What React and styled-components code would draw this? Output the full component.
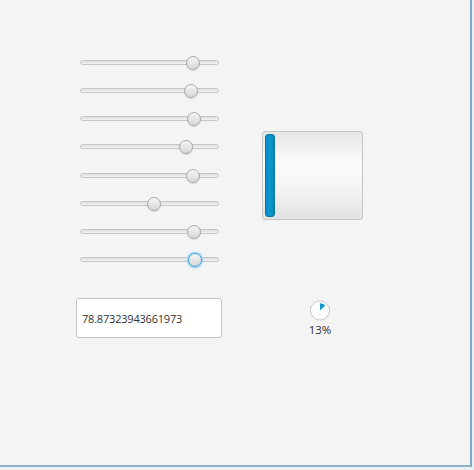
import { createGlobalStyle } from 'styled-components';
import styled from 'styled-components';

const GlobalStyle = createGlobalStyle`
  html, body {
    margin: 0;
    padding: 0;
    background: #eaf1f5;
  }
  * {
    box-sizing: border-box;
  }
`;

const Window = styled.div`
  background: #f4f4f4;
  border-bottom: 2px solid #8eb1c4;
  border-right: 2px solid #7fa8c9;
  font-family: 'Open Sans', 'Segoe UI', sans-serif;
  height: 467px;
  width: 472px;
`;

const Layout = styled.div`
  column-gap: 40px;
  display: grid;
  grid-template-columns: 146px 100px;
  grid-template-rows: 226px 39px;
  padding: 48px 0 0 76px;
  row-gap: 24px;
`;

const SliderList = styled.div`
  display: flex;
  flex-direction: column;
  padding-left: 4px;
`;

const SliderRow = styled.div`
  align-items: center;
  display: flex;
  height: 28.25px;
  position: relative;
  width: 139px;
`;

const Track = styled.div`
  background: linear-gradient(#dedede, #f3f3f3);
  border: 1px solid #c6c6c6;
  border-radius: 3px;
  height: 5px;
  width: 100%;
`;

const Thumb = styled.div`
  background: linear-gradient(#f5f5f5, #d6d6d6);
  border: 1px solid ${(props) => (props.focused ? '#3aa1d8' : '#a9a9a9')};
  border-radius: 50%;
  box-shadow: ${(props) =>
    props.focused ? '0 0 0 1px #9fd3ee, 0 0 3px 1px #bfe3f4' : '0 1px 1px rgba(0,0,0,0.12)'};
  height: 14px;
  margin-left: -7px;
  position: absolute;
  top: 7.5px;
  width: 14px;
`;

const RightTop = styled.div`
  padding-top: 83px;
`;

const ProgressBox = styled.div`
  background: linear-gradient(#e6e6e6, #fbfbfb 35%, #f4f4f4 65%, #e2e2e2);
  border: 1px solid #c6c6c6;
  border-radius: 3px;
  height: 89px;
  padding: 2px;
  width: 101px;
`;

const ProgressFill = styled.div`
  background: linear-gradient(90deg, #0a8cc0, #0a9ad0 50%, #0a86b6);
  border: 1px solid #0b78a3;
  border-radius: 3px;
  height: 100%;
  width: 10px;
`;

const Field = styled.div`
  align-items: center;
  background: #ffffff;
  border: 1px solid #c4c4c4;
  border-radius: 3px;
  color: #333333;
  display: flex;
  font-size: 11px;
  height: 40px;
  letter-spacing: -0.2px;
  padding-left: 5px;
`;

const Indicator = styled.div`
  align-items: center;
  display: flex;
  flex-direction: column;
  margin-left: 37px;
  margin-top: 2px;
  width: 42px;
`;

const IndicatorLabel = styled.div`
  color: #2e2e2e;
  font-size: 11.5px;
  line-height: 14px;
  margin-top: 2px;
`;

const values = [0.81, 0.8, 0.82, 0.76, 0.81, 0.53, 0.82, 0.83];

const Pie = ({ progress }) => {
  const angle = progress * 2 * Math.PI;
  const r = 7.5;
  const x = 11 + r * Math.sin(angle);
  const y = 11 - r * Math.cos(angle);
  return (
    <svg width="22" height="22" viewBox="0 0 22 22">
      <circle cx="11" cy="11" r="10" fill="#ffffff" stroke="#c4c4c4" strokeWidth="1" />
      <path d={`M11 11 L11 ${11 - r} A${r} ${r} 0 0 1 ${x} ${y} Z`} fill="#0b96cf" />
    </svg>
  );
};

const App = () => {
  return (
    <>
      <GlobalStyle />
      <Window>
        <Layout>
          <SliderList>
            {values.map((v, i) => (
              <SliderRow key={i}>
                <Track />
                <Thumb focused={i === values.length - 1} style={{ left: `${v * 100}%` }} />
              </SliderRow>
            ))}
          </SliderList>
          <RightTop>
            <ProgressBox>
              <ProgressFill />
            </ProgressBox>
          </RightTop>
          <Field>78.87323943661973</Field>
          <Indicator>
            <Pie progress={0.13} />
            <IndicatorLabel>13%</IndicatorLabel>
          </Indicator>
        </Layout>
      </Window>
    </>
  );
};

export default App;
